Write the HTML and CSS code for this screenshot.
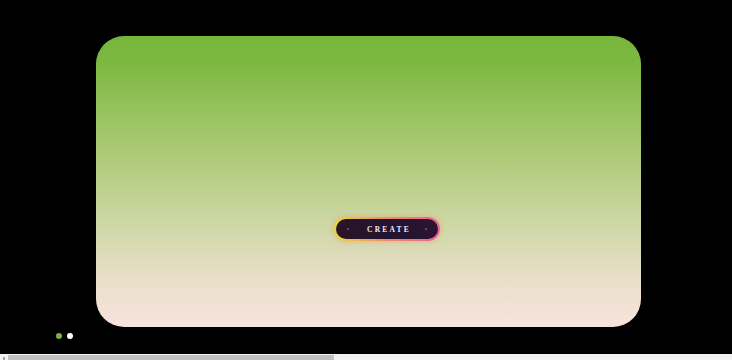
FILE: index.html
```html
<!DOCTYPE html>
<html>
<head>
<meta charset="utf-8">
<link rel="stylesheet" href="styles.css">
</head>
<body>
<div class="scroller">
  <div class="track">
    <section class="slide">
      <div class="card">
        <button class="create">
          <span class="spark"></span>
          <span class="label">CREATE</span>
          <span class="spark"></span>
        </button>
      </div>
      <div class="dots">
        <span class="dot active"></span>
        <span class="dot"></span>
      </div>
    </section>
    <section class="slide"></section>
  </div>
  <div class="hscroll">
    <span class="arrow"></span>
    <span class="thumb"></span>
  </div>
</div>
</body>
</html>
```
FILE: styles.css
```css
html, body {
  margin: 0;
  padding: 0;
  background: #000;
  overflow: hidden;
  width: 732px;
  height: 360px;
}
.scroller {
  position: relative;
  width: 732px;
  height: 360px;
  overflow: hidden;
}
.track {
  display: flex;
  width: 1600px;
}
.slide {
  flex: none;
  width: 732px;
  padding: 36px 0 0 96px;
  box-sizing: border-box;
}
.card {
  width: 545px;
  height: 291px;
  border-radius: 28px;
  background: linear-gradient(180deg, #76b63a 0%, #7bb840 8%, #a4c76d 35%, #cbd6a1 62%, #eae0cc 85%, #f8e3dc 100%);
  display: flex;
  justify-content: center;
  box-sizing: border-box;
  padding: 181px 0 0 37px;
}
.create {
  width: 106px;
  height: 24px;
  border-radius: 12px;
  border: 2px solid transparent;
  background:
    linear-gradient(90deg, #2a1428, #241330 50%, #2b1432) padding-box,
    linear-gradient(90deg, #ead83a, #f08a70 50%, #ec5f9a) border-box;
  box-shadow: 0 0 4px rgba(240, 200, 90, 0.55), 0 0 5px rgba(236, 100, 150, 0.35);
  display: flex;
  align-items: center;
  justify-content: space-between;
  padding: 0 11px;
  box-sizing: border-box;
  cursor: pointer;
}
.label {
  font-family: "Liberation Serif", "DejaVu Serif", serif;
  font-weight: bold;
  font-size: 7.5px;
  letter-spacing: 2.2px;
  color: #f4eef4;
  margin-left: 4px;
}
.spark {
  width: 2px;
  height: 2px;
  border-radius: 50%;
  background: rgba(160, 140, 150, 0.6);
}
.dots {
  display: flex;
  gap: 5px;
  margin: 6px 0 0 -40px;
}
.dot {
  width: 6px;
  height: 6px;
  border-radius: 50%;
  background: #fff;
}
.dot.active {
  background: #7cb342;
}
.hscroll {
  position: absolute;
  left: 0;
  right: 0;
  bottom: 0;
  height: 6px;
  background: #f1f1f1;
  display: flex;
  align-items: flex-start;
}
.arrow {
  width: 8px;
  height: 6px;
  position: relative;
  flex: none;
}
.arrow::after {
  content: "";
  position: absolute;
  left: 3px;
  top: 3px;
  width: 2px;
  height: 3px;
  background: #a3a3a3;
}
.thumb {
  width: 326px;
  height: 6px;
  margin-top: 1px;
  background: #c1c1c1;
  flex: none;
}
```
